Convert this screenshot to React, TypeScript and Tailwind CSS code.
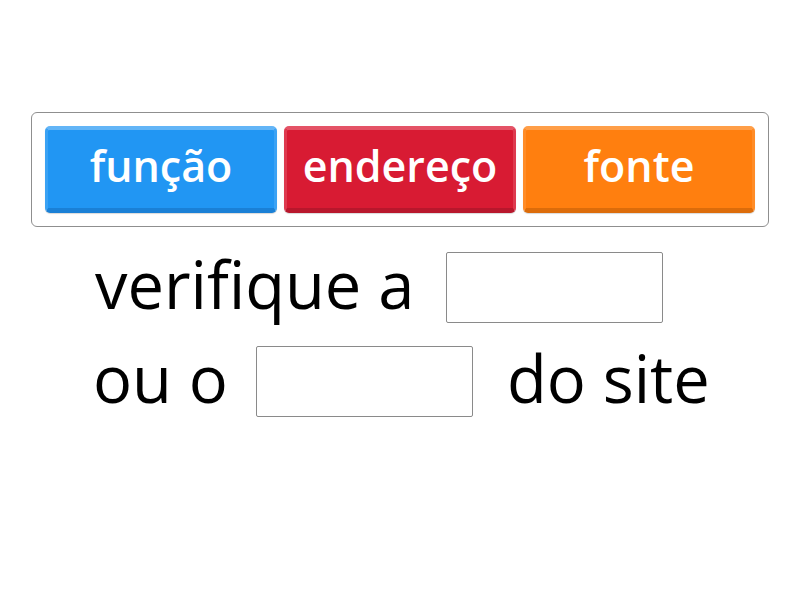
import React from "react"

const words = [
  { label: "função", cls: "bg-[#2196f3] border-t-[#63b5f7] border-x-[#3aa2f4] border-b-[#1a80d6]" },
  { label: "endereço", cls: "bg-[#d81b33] border-t-[#e45366] border-x-[#de3a4f] border-b-[#b8172c]" },
  { label: "fonte", cls: "bg-[#ff7f0f] border-t-[#ff9e48] border-x-[#ff8c27] border-b-[#dc6c0a]" },
]

function Blank() {
  return <div className="w-[217px] h-[71px] border border-[#8a8a8a] rounded-[2px] bg-white" />
}

export default function App() {
  return (
    <div className="w-[800px] h-[600px] bg-white font-['Open_Sans',sans-serif]">
      <div className="pt-[112px] px-[31px]">
        <div className="flex gap-[7px] p-[13px] border border-[#8f8f8f] rounded-[6px]">
          {words.map((w) => (
            <div
              key={w.label}
              className={`w-[232px] h-[87px] flex items-center justify-center rounded-[5px] border-t-[4px] border-x-[3px] border-b-[5px] text-white text-[43px] font-semibold shadow-[0_1px_1px_rgba(0,0,0,0.15)] ${w.cls}`}
            >
              <span className="leading-none -mt-[8px]">{w.label}</span>
            </div>
          ))}
        </div>
      </div>
      <div className="pl-[95px] pt-[25px] flex flex-col gap-[23px] text-[65px] text-black leading-none">
        <div className="flex items-center h-[71px]">
          <span className="-mt-[6px]">verifique a</span>
          <div className="ml-[32px]">
            <Blank />
          </div>
        </div>
        <div className="flex items-center h-[71px]">
          <span className="-mt-[6px] -ml-[2px]">ou o</span>
          <div className="ml-[28px]">
            <Blank />
          </div>
          <span className="ml-[34px] -mt-[6px]">do site</span>
        </div>
      </div>
    </div>
  )
}
